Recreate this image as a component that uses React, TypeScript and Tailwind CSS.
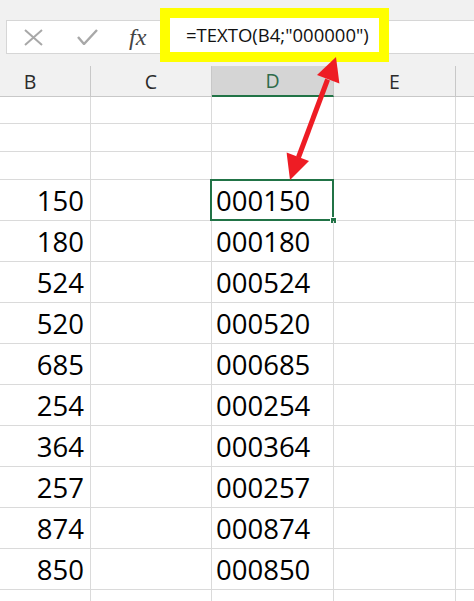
import React from "react"

const values = [150, 180, 524, 520, 685, 254, 364, 257, 874, 850]

const cols = "grid grid-cols-[121px_121px_122px_122px_1fr]"
const cell = "border-r border-b border-[#dadada]"

function Arrow() {
  // red double headed arrow from the formula box down to D4
  return (
    <svg className="pointer-events-none absolute inset-0" width={474} height={601} viewBox="0 0 474 601">
      <line x1={327.6} y1={79.5} x2={298.4} y2={157.5} stroke="#ee1c24" strokeWidth={5} />
      <polygon points="336,57 339.4,83.4 317.0,75.0" fill="#ee1c24" />
      <polygon points="290,180 309.0,161.0 286.6,152.6" fill="#ee1c24" />
    </svg>
  )
}

export default function App() {
  return (
    <div className="relative h-[601px] w-[474px] overflow-hidden bg-white font-['Open_Sans',sans-serif] text-black">
      {/* formula bar */}
      <div className="h-[66px] bg-[#f1f1f1] pt-[20px] pl-[6px]">
        <div className="flex h-[34px] items-center border-y border-l border-[#d6d6d6] bg-white">
          <svg className="ml-[17px]" width={19} height={17} viewBox="0 0 19 17">
            <path d="M1 1 L18 16 M18 1 L1 16" stroke="#a8a8a8" strokeWidth={2} fill="none" />
          </svg>
          <svg className="ml-[34px]" width={21} height={16} viewBox="0 0 21 16">
            <path d="M1 8 L7 15 L20 1" stroke="#a8a8a8" strokeWidth={2.4} fill="none" />
          </svg>
          <span className="ml-[31px] font-['Liberation_Serif',serif] text-[24px] italic leading-none text-[#444]">
            fx
          </span>
        </div>
      </div>

      <div className="-ml-[30px] w-[504px]">
        {/* column headers */}
        <div className={`${cols} h-[31px] bg-[#f1f1f1] text-[19.5px] text-[#2b2b2b]`}>
          <div className="flex items-center justify-center border-r border-b border-[#c8c8c8]">B</div>
          <div className="flex items-center justify-center border-r border-b border-[#c8c8c8]">C</div>
          <div className="flex items-center justify-center border-r border-b-2 border-r-[#c8c8c8] border-b-[#217346] bg-[#d5d5d5] text-[#2f6b4a]">
            D
          </div>
          <div className="flex items-center justify-center border-r border-b border-[#c8c8c8]">E</div>
          <div className="border-b border-[#c8c8c8]" />
        </div>

        {/* empty rows */}
        {["h-[27px]", "h-[28px]", "h-[28px]"].map((h, i) => (
          <div key={i} className={`${cols} ${h}`}>
            <div className={cell} />
            <div className={cell} />
            <div className={cell} />
            <div className={cell} />
            <div className="border-b border-[#dadada]" />
          </div>
        ))}

        {/* data rows */}
        {values.map((v, i) => (
          <div key={v} className={`${cols} h-[41px] text-[27.5px] leading-[28px]`}>
            <div className={`${cell} flex items-center justify-end pt-[2px] pr-[6px]`}>{v}</div>
            <div className={cell} />
            <div className={`${cell} relative flex items-center pt-[2px] pl-[4px]`}>
              {String(v).padStart(6, "0")}
              {i === 0 && (
                <>
                  <div className="absolute -top-[1px] -right-[1px] -bottom-[1px] -left-[2px] border-2 border-[#217346]" />
                  <div className="absolute -right-[4px] -bottom-[4px] h-[7px] w-[7px] border border-white bg-[#217346]" />
                </>
              )}
            </div>
            <div className={cell} />
            <div className="border-b border-[#dadada]" />
          </div>
        ))}

        <div className={`${cols} h-[20px]`}>
          <div className="border-r border-[#dadada]" />
          <div className="border-r border-[#dadada]" />
          <div className="border-r border-[#dadada]" />
          <div className="border-r border-[#dadada]" />
          <div />
        </div>
      </div>

      {/* yellow highlight around the formula */}
      <div className="absolute top-[8px] left-[160px] flex h-[54px] w-[229px] items-center border-[10px] border-[#ffff00] bg-white pl-[16px] text-[18.5px] text-[#111]">
        =TEXTO(B4;"000000")
      </div>

      <Arrow />
    </div>
  )
}
